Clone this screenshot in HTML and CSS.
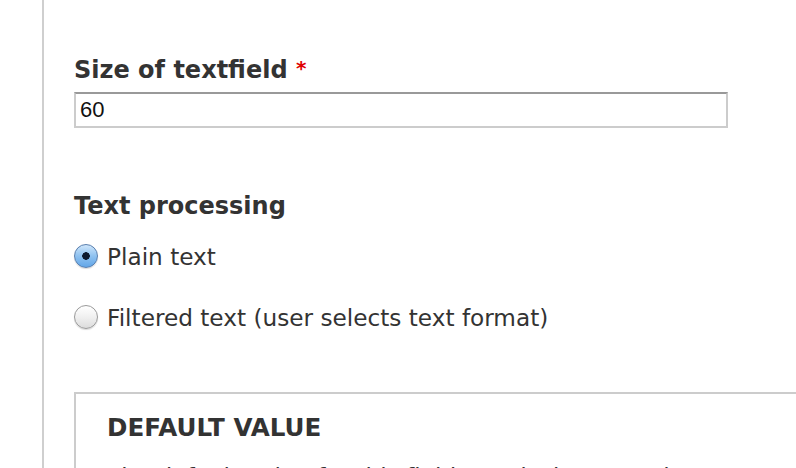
FILE: index.html
```html
<!DOCTYPE html>
<html>
<head>
<meta charset="utf-8">
<link rel="stylesheet" href="styles.css">
</head>
<body>
<div class="page">
  <div class="form-item">
    <label class="field-label" for="size">Size of textfield <span class="required">*</span></label>
    <input class="text-input" id="size" type="text" value="60">
  </div>
  <div class="form-item radios">
    <div class="field-label">Text processing</div>
    <label class="radio-row first"><input class="radio" type="radio" name="tp" checked><span>Plain text</span></label>
    <label class="radio-row"><input class="radio" type="radio" name="tp"><span>Filtered text (user selects text format)</span></label>
  </div>
  <fieldset class="panel">
    <div class="panel-title">DEFAULT VALUE</div>
    <div class="panel-desc">The default value for this field, used when creating new content.</div>
  </fieldset>
</div>
</body>
</html>
```
FILE: styles.css
```css
html, body {
  margin: 0;
  padding: 0;
  overflow: hidden;
  background: #fff;
  height: 468px;
}
.page {
  margin-left: 42px;
  border-left: 2px solid #cfcfcf;
  padding: 55px 0 0 30px;
  height: 468px;
  box-sizing: border-box;
  overflow: hidden;
  color: #333;
  font-family: "DejaVu Sans", sans-serif;
}
.field-label {
  display: block;
  font-weight: 700;
  font-size: 24px;
  line-height: 30px;
  height: 30px;
  color: #333;
}
.required {
  color: #e00000;
  font-size: 20px;
  line-height: 0;
  vertical-align: 3px;
}
.text-input {
  display: block;
  box-sizing: border-box;
  margin: 7px 0 0 0;
  width: 654px;
  height: 36px;
  border: 2px solid #ccc;
  border-top-color: #999;
  padding: 0 4px;
  font-family: "Liberation Sans", Arial, sans-serif;
  font-size: 22px;
  color: #111;
  outline: none;
  background: #fff;
}
.radios {
  margin-top: 63px;
}
.radio-row {
  display: flex;
  align-items: flex-start;
  font-size: 23.2px;
  line-height: 30px;
  margin-top: 31px;
  color: #333;
}
.radio-row.first {
  margin-top: 21px;
}
.radio {
  appearance: none;
  -webkit-appearance: none;
  width: 24px;
  height: 24px;
  margin: 2px 9px 0 0;
  border-radius: 50%;
  border: 1px solid #9a9a9a;
  box-sizing: border-box;
  background: linear-gradient(#ffffff, #f0f0f0 50%, #dcdcdc);
  box-shadow: 0 1px 1px rgba(0,0,0,0.15);
  flex: none;
}
.radio:checked {
  border-color: #5a7fae;
  background: radial-gradient(circle at 50% 50%, #0d1a2e 0, #0d1a2e 3.5px, transparent 4px),
              linear-gradient(#cfe6fb, #8fc2f0 50%, #62a6e8);
}
.panel {
  margin: 59px 0 0 0;
  padding: 19px 0 0 31px;
  border: 2px solid #ccc;
  width: 800px;
  min-width: 0;
  height: 200px;
}
.panel-title {
  font-weight: 700;
  font-size: 24.6px;
  line-height: 30px;
  color: #333;
}
.panel-desc {
  margin-top: 19px;
  font-size: 23.2px;
  line-height: 30px;
  color: #333;
  white-space: nowrap;
}
```
